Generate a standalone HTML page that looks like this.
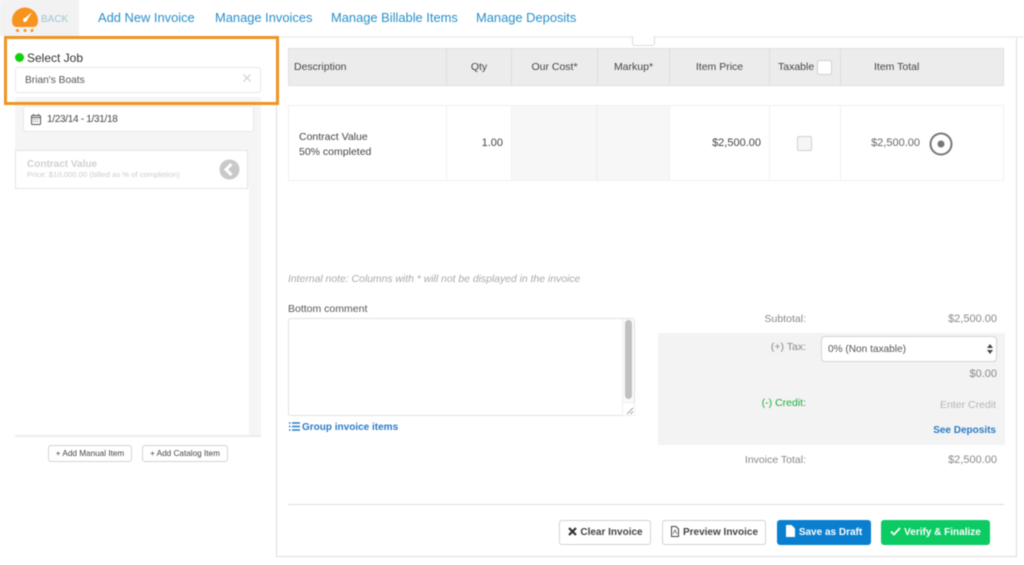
<!DOCTYPE html>
<html><head><meta charset="utf-8"><style>
html,body{margin:0;padding:0;background:#fff}
#p{position:relative;width:1024px;height:565px;overflow:hidden;background:#fff;font-family:"Liberation Sans",sans-serif;color:#444;font-size:11px;filter:blur(.4px)}
#p div,#p svg{position:absolute;box-sizing:border-box}
.t{white-space:nowrap;line-height:14px}
.nav{top:10px;color:#2a8fc9;font-size:12.900px;line-height:16px;white-space:nowrap}
.r{text-align:right}
.c{text-align:center}
.h{top:60px;color:#444;font-size:10.5px}
.cell{border:1px solid #f0f0f0}
.btn{border:1px solid #d2d2d2;border-radius:3px;background:#fff;color:#444;font-weight:bold;font-size:10px;line-height:24px;text-align:center;white-space:nowrap}
</style></head><body><div id="p">
<div style="left:0;top:0;width:79px;height:36px;background:#f2f2f2"></div>
<svg style="left:12px;top:7px" width="27" height="27" viewBox="0 0 27 27"><path d="M0 13.500A13 13 0 0 1 26 13.500Q26 20 21 20H5Q0 20 0 13.500Z" fill="#f7931e"/><path d="M12 12L20 5L14.500 14Z" fill="#fff"/><circle cx="13" cy="13" r="2" fill="#fff"/><circle cx="5.500" cy="23.500" r="1.500" fill="#f7931e"/><circle cx="13" cy="23.500" r="1.500" fill="#f7931e"/><circle cx="20" cy="23.500" r="1.500" fill="#f7931e"/></svg>
<div class="t" style="left:41px;top:13px;color:#9cc4d2;font-size:10px">BACK</div>
<div class="nav" style="left:98px">Add New Invoice</div>
<div class="nav" style="left:215px">Manage Invoices</div>
<div class="nav" style="left:331px">Manage Billable Items</div>
<div class="nav" style="left:476px">Manage Deposits</div>
<div style="left:79px;top:36px;width:945px;height:2px;background:#f2f2f2"></div>

<div style="left:15px;top:97px;width:246px;height:340px;background:#f5f5f5"></div>
<div style="left:23px;top:106px;width:231px;height:26px;background:#fff;border:1px solid #e8e8e8;border-radius:3px"></div>
<svg style="left:31px;top:114px" width="10" height="11" viewBox="0 0 10 11"><rect x=".5" y="1.500" width="9" height="9" rx="1" fill="none" stroke="#555"/><path d="M0 3.500H10" stroke="#555"/><path d="M2 5.500h6M2 7.500h6" stroke="#777" stroke-dasharray="1 1"/><path d="M2.500 0v2M7.500 0v2" stroke="#555"/></svg>
<div class="t" style="left:47px;top:113px;font-size:10px;letter-spacing:-.3px;color:#444">1/23/14 - 1/31/18</div>
<div style="left:15px;top:188px;width:234px;height:248px;background:#fff"></div>
<div style="left:15px;top:150px;width:233px;height:39px;background:#fff;border:1px solid #e4e4e4"></div>
<div class="t" style="left:27px;top:158px;font-size:10px;font-weight:bold;color:#d0d0d0">Contract Value</div>
<div class="t" style="left:27px;top:168px;font-size:7.700px;color:#ccc">Price: $10,000.00 (billed as % of completion)</div>
<svg style="left:219px;top:159px" width="21" height="21" viewBox="0 0 21 21"><circle cx="10.500" cy="10.500" r="10" fill="#c9c9c9"/><path d="M12.500 5L7 10.500L12.500 16" fill="none" stroke="#fff" stroke-width="3"/></svg>
<div style="left:15px;top:435px;width:246px;height:2px;background:#ededed"></div>

<div style="left:4px;top:36px;width:275px;height:69px;border:3px solid #f0931f"></div>
<div style="left:15px;top:53px;width:9px;height:9px;border-radius:50%;background:#0ed10e"></div>
<div class="t" style="left:27px;top:51px;font-size:12px;color:#333">Select Job</div>
<div style="left:15px;top:67px;width:246px;height:26px;background:#fff;border:1px solid #e8e8e8;border-radius:3px"></div>
<div class="t" style="left:25px;top:74px;font-size:10.200px;color:#555">Brian's Boats</div>
<svg style="left:243px;top:74px" width="8" height="8" viewBox="0 0 8 8"><path d="M.5.500L7.500 7.500M7.500.500L.5 7.500" stroke="#ccc" stroke-width="1"/></svg>

<div class="btn" style="left:48px;top:445px;width:84px;height:17px;line-height:15px;font-weight:normal;font-size:8.200px">+ Add Manual Item</div>
<div class="btn" style="left:142px;top:445px;width:86px;height:17px;line-height:15px;font-weight:normal;font-size:8.200px">+ Add Catalog Item</div>

<div style="left:276px;top:105px;width:741px;height:452px;border:1px solid #ddd;border-top:0"></div>
<div style="left:1016px;top:38px;width:1px;height:70px;background:#ddd"></div>
<div style="left:632px;top:36px;width:23px;height:10px;background:#fff;border:1px solid #ddd;border-top:0;border-radius:0 0 3px 3px"></div>

<div style="left:288px;top:48px;width:716px;height:38px;background:#ececec;border:1px solid #e0e0e0"></div>
<div style="left:446px;top:48px;width:1px;height:38px;background:#ddd"></div>
<div style="left:511px;top:48px;width:1px;height:38px;background:#ddd"></div>
<div style="left:597px;top:48px;width:1px;height:38px;background:#ddd"></div>
<div style="left:669px;top:48px;width:1px;height:38px;background:#ddd"></div>
<div style="left:769px;top:48px;width:1px;height:38px;background:#ddd"></div>
<div style="left:840px;top:48px;width:1px;height:38px;background:#ddd"></div>
<div class="t h" style="left:294px">Description</div>
<div class="t h c" style="left:447px;width:64px">Qty</div>
<div class="t h c" style="left:512px;width:85px">Our Cost*</div>
<div class="t h c" style="left:598px;width:71px">Markup*</div>
<div class="t h c" style="left:670px;width:99px">Item Price</div>
<div class="t h" style="left:778px">Taxable</div>
<div style="left:817px;top:60px;width:15px;height:15px;background:#fff;border:1px solid #d0d0d0;border-radius:2px"></div>
<div class="t h" style="left:874px">Item Total</div>

<div class="cell" style="left:288px;top:105px;width:716px;height:76px"></div>
<div style="left:446px;top:105px;width:1px;height:76px;background:#f0f0f0"></div>
<div style="left:511px;top:105px;width:86px;height:76px;background:#f7f7f7;border:1px solid #f0f0f0"></div>
<div style="left:597px;top:105px;width:73px;height:76px;background:#f7f7f7;border:1px solid #f0f0f0"></div>
<div style="left:769px;top:105px;width:1px;height:76px;background:#f0f0f0"></div>
<div style="left:840px;top:105px;width:1px;height:76px;background:#f0f0f0"></div>
<div class="t" style="left:299px;top:130px;font-size:10.500px;color:#444">Contract Value</div>
<div class="t" style="left:299px;top:145px;font-size:10.500px;color:#444">50% completed</div>
<div class="t r" style="left:450px;width:53px;top:136px;font-size:11px;color:#444">1.00</div>
<div class="t r" style="left:680px;width:81px;top:136px;font-size:11px;color:#444">$2,500.00</div>
<div style="left:797px;top:136px;width:15px;height:15px;background:#f5f5f5;border:1px solid #d0d0d0;border-radius:2px"></div>
<div class="t r" style="left:850px;width:70px;top:136px;font-size:11px;color:#666">$2,500.00</div>
<svg style="left:929px;top:132px" width="24" height="24" viewBox="0 0 24 24"><circle cx="12" cy="12" r="10.500" fill="none" stroke="#777" stroke-width="2"/><circle cx="12" cy="12" r="3.500" fill="#777"/></svg>

<div class="t" style="left:288px;top:273px;font-size:10.400px;font-style:italic;color:#aaa">Internal note: Columns with * will not be displayed in the invoice</div>
<div class="t" style="left:288px;top:302px;font-size:10.500px;color:#555">Bottom comment</div>
<div style="left:288px;top:318px;width:347px;height:98px;background:#fff;border:1px solid #e2e2e2;border-radius:3px"></div>
<div style="left:622px;top:319px;width:12px;height:96px;background:#fafafa;border-left:1px solid #f0f0f0"></div>
<div style="left:625px;top:320px;width:7px;height:79px;background:#c1c1c1;border-radius:4px"></div>
<svg style="left:622px;top:402px" width="13" height="14" viewBox="0 0 13 14"><rect x=".5" y=".5" width="12" height="13" fill="#fff" stroke="#eee"/><path d="M5 12L11 6M8.500 12L11 9.500" stroke="#888" stroke-width=".8"/></svg>
<svg style="left:289px;top:422px" width="11" height="9" viewBox="0 0 11 9"><path d="M0 1H1.500M0 4.500H1.500M0 8H1.500" stroke="#2a7cc7" stroke-width="1.500"/><path d="M3 1H11M3 4.500H11M3 8H11" stroke="#2a7cc7" stroke-width="1.500"/></svg>
<div class="t" style="left:302px;top:421px;font-size:10px;font-weight:bold;color:#2a7cc7">Group invoice items</div>

<div class="t r" style="left:700px;width:106px;top:312px;font-size:10.500px;color:#888">Subtotal:</div>
<div class="t r" style="left:900px;width:97px;top:312px;font-size:11px;color:#888">$2,500.00</div>
<div style="left:658px;top:333px;width:347px;height:112px;background:#f3f3f3"></div>
<div class="t r" style="left:700px;width:106px;top:340px;font-size:10.500px;color:#888">(+) Tax:</div>
<div style="left:821px;top:336px;width:176px;height:26px;background:#fff;border:1px solid #d4d4d4;border-radius:4px"></div>
<div class="t" style="left:828px;top:343px;font-size:10.100px;color:#555">0% (Non taxable)</div>
<svg style="left:987px;top:344px" width="6" height="10" viewBox="0 0 6 10"><path d="M3 0L6 4H0ZM3 10L0 6H6Z" fill="#444"/></svg>
<div class="t r" style="left:900px;width:97px;top:367px;font-size:11px;color:#888">$0.00</div>
<div class="t r" style="left:700px;width:106px;top:396px;font-size:10.500px;color:#1dae3a">(-) Credit:</div>
<div class="t r" style="left:900px;width:96px;top:398px;font-size:10.500px;color:#b5b5b5">Enter Credit</div>
<div class="t r" style="left:900px;width:96px;top:424px;font-size:10px;font-weight:bold;color:#2a7cc7">See Deposits</div>
<div class="t r" style="left:700px;width:106px;top:453px;font-size:10.500px;color:#888">Invoice Total:</div>
<div class="t r" style="left:900px;width:97px;top:453px;font-size:11px;color:#888">$2,500.00</div>

<div style="left:288px;top:504px;width:716px;height:1px;background:#ddd"></div>
<div class="btn" style="left:559px;top:520px;width:92px;height:25px;padding-left:13px">Clear Invoice</div>
<svg style="left:568px;top:527px" width="9" height="9" viewBox="0 0 9 9"><path d="M1 1L8 8M8 1L1 8" stroke="#333" stroke-width="2.200"/></svg>
<div class="btn" style="left:662px;top:520px;width:104px;height:25px;padding-left:13px">Preview Invoice</div>
<svg style="left:671px;top:526px" width="8" height="11" viewBox="0 0 8 11"><path d="M.5.500H5L7.500 3V10.500H.5Z" fill="none" stroke="#444"/><path d="M2 8L4 4L6 8" fill="none" stroke="#444" stroke-width=".7"/></svg>
<div class="btn" style="left:777px;top:520px;width:94px;height:25px;background:#0a7fcf;border-color:#0a7fcf;color:#fff;padding-left:13px">Save as Draft</div>
<svg style="left:786px;top:525px" width="9" height="12" viewBox="0 0 9 12"><path d="M0 0H5.500L9 3.500V12H0Z" fill="#fff"/></svg>
<div class="btn" style="left:881px;top:520px;width:109px;height:25px;background:#0ccb62;border-color:#0ccb62;color:#fff;padding-left:14px">Verify &amp; Finalize</div>
<svg style="left:890px;top:527px" width="11" height="9" viewBox="0 0 11 9"><path d="M1 4.500L4 7.500L10 1" fill="none" stroke="#fff" stroke-width="1.800"/></svg>
</div></body></html>
